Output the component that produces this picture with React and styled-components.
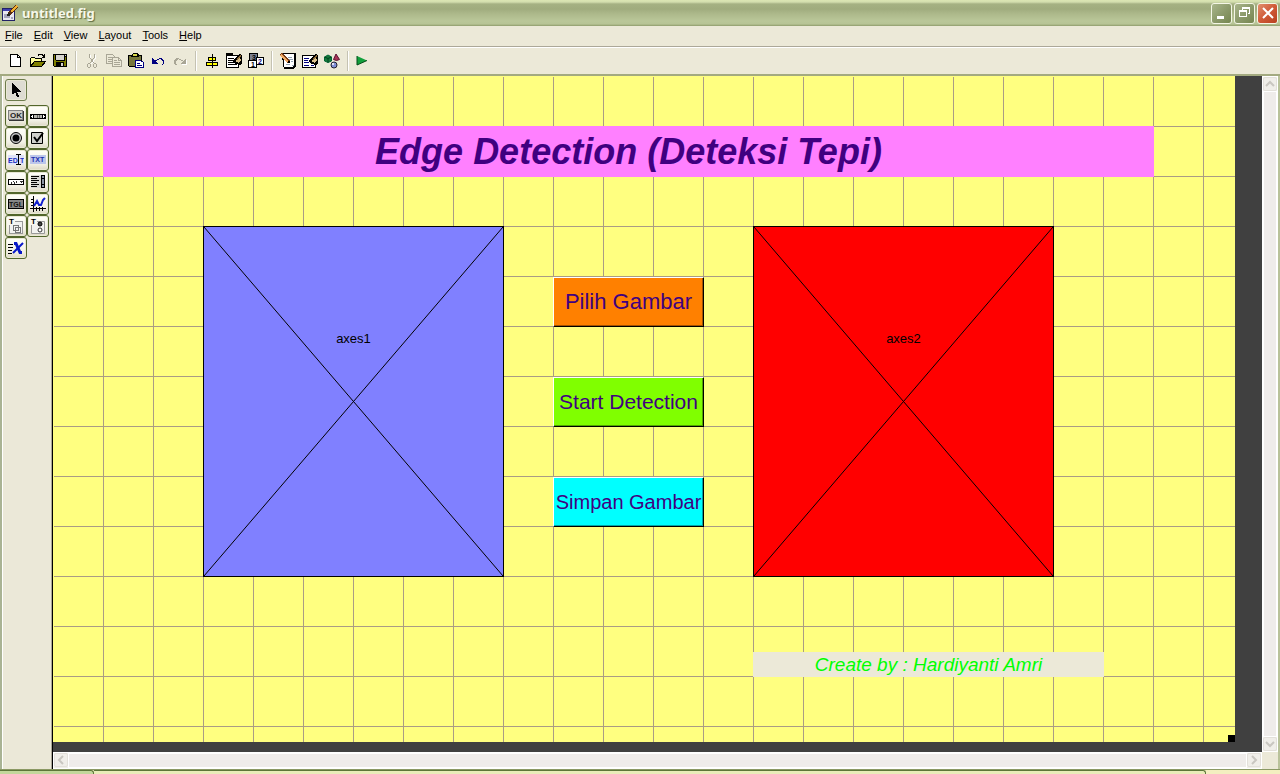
import React from "react";
import styled, { createGlobalStyle, css } from "styled-components";

const GlobalStyle = createGlobalStyle`
  *, *::before, *::after { box-sizing: border-box; }
  body {
    margin: 0;
    overflow: hidden;
    background: #ece9d8;
    font-family: "Liberation Sans", Arial, sans-serif;
    font-size: 11px;
    color: #000;
  }
  button { font: inherit; color: inherit; padding: 0; margin: 0; }
`;

/* ---------- window frame ---------- */

const Window = styled.div`
  display: flex;
  flex-direction: column;
  height: 100vh;
`;

const TitleBar = styled.header`
  display: flex;
  align-items: center;
  flex: none;
  height: 26px;
  padding: 0 2px;
  background: linear-gradient(
    #dce6b4 0px, #d3deae 2px, #a5b183 4px, #a0ac7e 9px,
    #adb98b 14px, #bac799 21px, #b7c495 24px, #8f9c6c 26px
  );
`;

const WindowTitle = styled.h1`
  flex: 1;
  margin: 0 0 0 4px;
  font: bold 13px/18px "Noto Sans", "Open Sans", sans-serif;
  color: #f6f8ea;
  text-shadow: 1px 1px 1px #5f6c43;
`;

const CaptionButtons = styled.div`
  display: flex;
  gap: 2px;
`;

const CaptionButton = styled.button`
  display: grid;
  place-items: center;
  width: 21px;
  height: 21px;
  border: 1px solid #f4f6e6;
  border-radius: 3px;
  background: ${(p) =>
    p.$close
      ? "linear-gradient(135deg, #e0906e, #d05a38 50%, #b8401f)"
      : "linear-gradient(135deg, #a9b58b, #8d9b6c 50%, #76864f)"};
`;

const MenuBar = styled.nav`
  display: flex;
  align-items: flex-start;
  gap: 11px;
  flex: none;
  height: 20px;
  padding-left: 5px;
`;

const MenuItem = styled.button`
  border: 0;
  background: none;
  line-height: 18px;
`;

const Toolbar = styled.div`
  display: flex;
  align-items: center;
  flex: none;
  height: 30px;
  padding-left: 5px;
  border-top: 1px solid #aca899;
  border-bottom: 2px solid #a3aa80;
  box-shadow: inset 0 1px #fff;
`;

const ToolButton = styled.button`
  display: grid;
  place-items: center;
  width: 22px;
  height: 22px;
  border: 0;
  background: none;
`;

const Separator = styled.span`
  width: 2px;
  height: 20px;
  margin: 0 4px;
  border-left: 1px solid #c5c2b2;
  border-right: 1px solid #fff;
`;

const Icon = styled.svg.attrs({ viewBox: "0 0 16 16", "aria-hidden": true })`
  display: block;
  width: 16px;
  height: 16px;
  shape-rendering: ${(p) => (p.$smooth ? "auto" : "crispEdges")};
  text { font-family: "Liberation Sans", Arial, sans-serif; font-weight: bold; }
`;

/* ---------- palette ---------- */

const Body = styled.main`
  display: flex;
  flex: 1;
  min-height: 0;
  border-right: 2px solid #b9c29a;
`;

const Palette = styled.aside`
  flex: none;
  width: 53px;
  padding: 3px 0 0 2px;
  background: #ebe8d8;
  border-left: 2px solid #a9b394;
  border-right: 1px solid #000;
  box-shadow: inset 1px 0 #fff, inset -1px 0 #aca899;
`;

const PaletteGrid = styled.div`
  display: grid;
  grid-template-columns: 22px 22px;
  margin: 4px 0 0 1px;
`;

const PaletteButton = styled.button`
  display: grid;
  place-items: center;
  width: 22px;
  height: 22px;
  border: 1px solid #52662b;
  border-radius: 3px;
  background: linear-gradient(#fffffa, #f3f1e6 70%, #dcd8c4);
  box-shadow: inset 0 0 0 1px #e9e8d4;
  ${(p) =>
    p.$pressed &&
    css`
      margin-left: 1px;
      background: #dedcd2;
      border-color: #6d7c4c;
    `}
`;

/* ---------- work area ---------- */

const WorkArea = styled.section`
  display: grid;
  grid-template: 1fr 17px / 1fr 16px;
  flex: 1;
  min-width: 0;
`;

const Desk = styled.div`
  display: flex;
  padding: 0 27px 10px 0;
  background: #404040;
`;

const Figure = styled.div`
  position: relative;
  flex: 1;
  overflow: hidden;
  background:
    repeating-linear-gradient(90deg, #aa9c84 0 1px, transparent 1px 50px),
    repeating-linear-gradient(#aa9c84 0 1px, transparent 1px 50px),
    #ffff80;
  box-shadow: inset 1px 1px #ffff80;
`;

/* A component placed freely on the figure canvas. */
const placed = css`
  position: absolute;
  left: ${(p) => p.$x}px;
  top: ${(p) => p.$y}px;
  width: ${(p) => p.$w}px;
  height: ${(p) => p.$h}px;
`;

const StaticText = styled.div`
  ${placed}
  display: grid;
  place-items: center;
  white-space: nowrap;
  background: ${(p) => p.$bg};
  color: ${(p) => p.$color};
  font-style: italic;
  font-weight: ${(p) => (p.$bold ? "bold" : "normal")};
  font-size: ${(p) => p.$size}px;
`;

const PushButton = styled.button`
  ${placed}
  display: grid;
  place-content: center;
  border: 1px solid;
  border-color: #fff #000 #000 #fff;
  box-shadow: inset -1px -1px #00000059;
  background: ${(p) => p.$bg};
  color: #400080;
  font-size: ${(p) => p.$size}px;
  white-space: nowrap;
`;

const AxesBox = styled.div`
  ${placed}
  background: ${(p) => p.$bg};
  border: 1px solid #000;
  padding-top: 104px;
  text-align: center;
  font-size: 13px;
  line-height: 16px;
`;

const AxesCross = styled.svg`
  position: absolute;
  inset: 0;
  width: 100%;
  height: 100%;
`;

const ResizeHandle = styled.span`
  position: absolute;
  right: 0;
  bottom: 0;
  width: 7px;
  height: 7px;
  background: #000;
`;

const ScrollBar = styled.div`
  display: flex;
  flex-direction: ${(p) => (p.$vertical ? "column" : "row")};
  background: #f1efea;
  border: 1px solid #fff;
`;

const ScrollTrack = styled.div`
  flex: 1;
  background: #efecea;
  border: 1px solid #fff;
`;

const ScrollButton = styled.button`
  display: grid;
  place-items: center;
  width: 14px;
  height: 14px;
  border: 1px solid #e3e0da;
  border-radius: 2px;
  background: #f0eee9;
`;

const BottomEdge = styled.footer`
  display: flex;
  flex: none;
  height: 5px;
  border-top: 1px solid #8b9964;
  background: #f3eec0;
`;

const TaskEdge = styled.span`
  width: ${(p) => p.$w};
  border-top: 1px solid #5d7639;
  border-right: 1px solid #5d7639;
  border-top-right-radius: 3px;
  background: ${(p) => p.$bg};
`;

/* ---------- icons ---------- */

const FigIcon = () => (
  <Icon>
    <path fill="#222266" d="M0 3h13v13H0z" />
    <path fill="#e8e8f0" d="M1 6h11v9H1z" />
    <path fill="#3f3fae" d="M1 4h11v2H1z" />
    <path fill="#a4a4bc" d="M2 9h6v4H2zM9 12h2v2H9z" />
    <path stroke="#5a2d10" strokeWidth="4" d="M7 9L15 1" />
    <path stroke="#f0b030" strokeWidth="2" d="M9 7L15 1" />
    <path fill="#222" d="M6 8h2v3H5z" />
  </Icon>
);

const NewIcon = () => (
  <Icon>
    <path fill="#fff" stroke="#000" d="M2.500 1.500h7l3 3v9h-10z" />
    <path fill="none" stroke="#000" d="M9.500 1.500v3h3" />
  </Icon>
);

const OpenIcon = () => (
  <Icon>
    <path fill="#ffff9c" stroke="#000" d="M.5 13V5.500l1-1h3l1 1h6v3" />
    <path fill="#808000" stroke="#000" d="M.5 13.500L4.500 8.500H15.500L11.500 13.500z" />
    <path fill="none" stroke="#000" d="M8 2.500l1-1h3l2 2M14.500 1v3h-3" />
  </Icon>
);

const SaveIcon = () => (
  <Icon>
    <path fill="#000" d="M1 1h14v13H2l-1-1z" />
    <path fill="#808000" d="M2 2h1v11H2zM13 4h1v9h-1zM3 8h10v1H3zM3 7h1v6H3zM12 8h1v5h-1z" />
    <path fill="#d6d3ce" d="M4 2h8v5H4zM13 2h1v1h-1zM9 10h2v3H9z" />
  </Icon>
);

const CutIcon = () => (
  <Icon>
    <path fill="none" stroke="#fff" d="M6.500 2v3l4 6M11.500 2v3l-4 6" />
    <path fill="none" stroke="#a9a696" d="M5.500 1v3l4 6M10.500 1v3l-4 6" />
    <path fill="none" stroke="#a9a696" d="M3.500 11.500l1-1h1l1 1v2l-1 1h-1l-1-1zM9.500 11.500l1-1h1l1 1v2l-1 1h-1l-1-1z" />
  </Icon>
);

const CopyIcon = () => (
  <Icon>
    <g fill="#ece9d8" stroke="#a9a696">
      <path d="M.5 1.500h6l2 2v7h-8zM2 4.500h4M2 6.500h4M2 8.500h4" />
      <path d="M6.500 4.500h6l3 3v6h-9zM8 7.500h3M8 9.500h6M8 11.500h6M12.500 4.500v3h3" />
    </g>
  </Icon>
);

const PasteIcon = () => (
  <Icon>
    <path fill="#000" d="M0 2h3l2-2h4l2 2h3v12H1l-1-1z" />
    <path fill="#77773d" d="M1 3h12v10H1z" />
    <path fill="#d8d84a" d="M5 1h4v2H5z" />
    <path fill="#000" d="M3 3h8v1H3z" />
    <path fill="#fff" stroke="#000080" d="M7.500 7.500h5l3 2v5h-8zM9 10.500h3M9 12.500h5" />
  </Icon>
);

const UndoIcon = () => (
  <Icon>
    <path fill="#000080" d="M2 5v6h6zM5 7h2V6h2V5h3v1h1v1h1v4h-1v1h-1v-1h1V8h-1V7h-1V6H9v1H7v1H5z" />
  </Icon>
);

const RedoIcon = () => (
  <Icon>
    <path fill="#fff" d="M15 6v6H9z" />
    <path fill="#a9a696" d="M14 5v6H8zM11 7H9V6H7V5H4v1H3v1H2v4h1v1h2v-1H4V8h1V7h1V6h1v1h2v1h2z" />
  </Icon>
);

const AlignIcon = () => (
  <Icon>
    <path fill="#ffff00" stroke="#000" d="M4.500 4.500h7v3h-7zM2.500 9.500h11v3h-11z" />
    <path fill="#000" d="M8 1h1v14H8z" />
  </Icon>
);

const Hand = () => (
  <>
    <path fill="#000" d="M16 2L13 1 8 6 7 9l2 2 5 1 2-1z" />
    <path fill="#d8c08c" d="M13 5L9 8l4 2 2-3z" />
    <path fill="#8d6a3a" d="M14 2l-4 4 1 1 4-4z" />
  </>
);

const MenuEditIcon = () => (
  <Icon>
    <path fill="#fff" stroke="#000" d="M.5 .5h6v2h6v12h-12z" />
    <path fill="#000" d="M1 1h6v2H1zM2 5h6v1H2zM2 7h5v1H2zM2 9h6v1H2zM2 11h9v1H2z" />
    <Hand />
  </Icon>
);

const TabOrderIcon = () => (
  <Icon>
    <path fill="#7c8090" stroke="#000" d="M1.500 .5h8v8h-8z" />
    <path fill="#fff" stroke="#000" d="M8.500 4.500h7v7h-7zM.5 7.500h8v7h-8z" />
    <text x="4" y="7" fontSize="7">3</text>
    <text x="10" y="11" fontSize="7" fill="#000080">2</text>
    <text x="3" y="14" fontSize="7">1</text>
  </Icon>
);

const MFileIcon = () => (
  <Icon>
    <path fill="#000" d="M2 0h14v13l-3 3H4v-2H3z" />
    <path fill="#fff" d="M2 1h12v11l-2 2H4V4z" />
    <path fill="#90a0b0" d="M8 4h4v1H8zM9 6h4v1H9zM11 8h2v1h-2zM6 11h4v1H6zM12 12h2v1h-2z" />
    <path stroke="#7a3c14" strokeWidth="3" d="M1 1l8 8" />
    <path stroke="#f0a860" strokeWidth="2" d="M1 2l7 7" />
    <path fill="#000" d="M8 8h2v2H8z" />
  </Icon>
);

const PropertyIcon = () => (
  <Icon>
    <path fill="#fff" stroke="#000" d="M.5 2.500h13v12H.5z" />
    <path fill="#000080" d="M2 5h5v1H2zM2 7h4v1H2zM2 9h5v1H2zM2 12h5v1H2zM9 12h3v1H9z" />
    <Hand />
  </Icon>
);

const ObjectsIcon = () => (
  <Icon $smooth>
    <path fill="#167a3c" stroke="#063" d="M.5 4L4 2l3.500 2v4L4 9.500.5 8z" />
    <path fill="none" stroke="#042" d="M.5 4L4 5.500 7.500 4M4 5.500v4" />
    <path fill="#a83256" stroke="#5a1030" d="M12 1L9.500 6.500l3 1 3-1z" />
    <circle cx="10" cy="12" r="3" fill="#8090d8" stroke="#223" />
    <circle cx="9" cy="11" r="1" fill="#fff" />
  </Icon>
);

const RunIcon = () => (
  <Icon $smooth>
    <path fill="#12a03c" d="M1 3L11 7.500 1 12z" />
    <path fill="none" stroke="#044a18" d="M1 12V3M1 12L11 7.500" />
  </Icon>
);

const ArrowIcon = () => (
  <Icon>
    <path fill="#000" d="M4 1v11h1l2-2 2 5h2V14l-2-4h4V9z" />
  </Icon>
);

const OkIcon = () => (
  <Icon>
    <path fill="#d0cfc8" stroke="#808080" d="M.5 2.500h14v9H.5z" />
    <path fill="#333" d="M1 12h15v1H1zM15 3h1v9h-1z" />
    <text x="2" y="10" fontSize="8" fill="#222">OK</text>
  </Icon>
);

const SliderIcon = () => (
  <Icon>
    <path fill="#000" d="M0 6h16v5H0z" />
    <path fill="#b8b8b0" d="M4 7h8v3H4z" />
    <path fill="#fff" d="M1 8h1v1H1zM2 7h1v3H2zM14 8h1v1h-1zM13 7h1v3h-1z" />
    <path fill="#666" d="M7 7h1v3H7zM9 7h1v3H9z" />
  </Icon>
);

const RadioIcon = () => (
  <Icon $smooth>
    <circle cx="8" cy="8" r="5.500" fill="#c8c8c8" stroke="#000" />
    <circle cx="8" cy="8" r="3.500" fill="#000" />
  </Icon>
);

const CheckIcon = () => (
  <Icon $smooth>
    <path fill="#d0d0cc" stroke="#000" d="M1.500 2.500h11v11h-11z" />
    <path fill="none" stroke="#000" strokeWidth="2" d="M4 7l3 4 6-8" />
  </Icon>
);

const EditIcon = () => (
  <Icon>
    <path fill="#dfe3f8" d="M0 3h16v10H0z" />
    <text x="0" y="11" fontSize="7" fill="#2030c0">ED</text>
    <text x="12" y="11" fontSize="7" fill="#2030c0">T</text>
    <path fill="none" stroke="#000" d="M8 2.500h2.500v10H8M13 2.500h-2M13 12.500h-2" />
  </Icon>
);

const TxtIcon = () => (
  <Icon>
    <path fill="#bcc6ea" d="M0 3h16v9H0z" />
    <text x="1" y="10" fontSize="7" fill="#2030b0">TXT</text>
  </Icon>
);

const PopupIcon = () => (
  <Icon>
    <path fill="#fff" stroke="#000" d="M.5 5.500h15v5H.5z" />
    <path fill="#333" d="M3 8h1v2H3zM5 7h1v1H5zM6 8h1v2H6zM8 7h1v2H8zM12 7h3v1h-1v1h-1V8h-1z" />
  </Icon>
);

const ListIcon = () => (
  <Icon>
    <path fill="#d8d8d4" d="M1 1h10v13H1z" />
    <path fill="#000" d="M1 2h8v1H1zM1 4h6v1H1zM1 6h8v1H1zM1 8h6v1H1zM1 10h8v1H1zM1 12h6v1H1z" />
    <path fill="#8a94a4" stroke="#000" d="M11.500 1.500h3v12h-3z" />
    <path fill="#000" d="M12 4h2v1h-2zM12 10h2v1h-2z" />
  </Icon>
);

const ToggleIcon = () => (
  <Icon>
    <path fill="#858585" stroke="#000" d="M.5 3.500h15v9H.5z" />
    <text x="1" y="11" fontSize="7" fill="#111">TGL</text>
  </Icon>
);

const AxesIcon = () => (
  <Icon>
    <path fill="none" stroke="#000" d="M3.500 0v16M0 12.500h16M1 9.500h2M1 6.500h2M1 3.500h2M6.500 11v4M9.500 11v4M12.500 11v4" />
    <path fill="none" stroke="#1020d0" strokeWidth="2" shapeRendering="auto" d="M4 10l3-5 2 4h2l2-5 2-2" />
  </Icon>
);

const PanelIcon = () => (
  <Icon>
    <path fill="#f2f2f0" stroke="#999" d="M1.500 3.500h13v12h-13z" />
    <path fill="#f8f7f0" d="M0 0h7v7H0z" />
    <text x="1" y="6" fontSize="8">T</text>
    <path fill="none" stroke="#777" d="M5.500 7.500h5v5h-5zM7.500 9.500h5v5h-5z" />
  </Icon>
);

const GroupIcon = () => (
  <Icon $smooth>
    <path fill="#f2f2f0" stroke="#999" d="M1.500 3.500h13v12h-13z" />
    <path fill="#f8f7f0" d="M0 0h7v7H0z" />
    <text x="1" y="6" fontSize="8">T</text>
    <circle cx="10" cy="6" r="2" fill="#444" stroke="#000" />
    <circle cx="10" cy="12" r="2" fill="#fff" stroke="#333" />
  </Icon>
);

const ActiveXIcon = () => (
  <Icon $smooth>
    <path fill="#000" d="M0 4h5v1H0zM0 7h5v1H0zM0 10h4v1H0zM0 13h4v1H0z" />
    <path fill="none" stroke="#0818c8" strokeWidth="3" d="M6 3.500h2l4 9h2" />
    <path fill="none" stroke="#0818c8" strokeWidth="2" d="M15 3L5 13" />
  </Icon>
);

const MinimizeIcon = () => (
  <Icon><path fill="#fff" d="M3 11h7v3H3z" /></Icon>
);
const RestoreIcon = () => (
  <Icon>
    <path fill="none" stroke="#fff" d="M5.500 5V2.500h7v6H11M5 3.500h8M2.500 5.500h7v6h-7zM2 6.500h8" />
  </Icon>
);
const CloseIcon = () => (
  <Icon $smooth><path stroke="#fff" strokeWidth="2" d="M3 3l10 10M13 3L3 13" /></Icon>
);

const chevrons = {
  left: "M7 1L3 5l4 4",
  right: "M3 1l4 4-4 4",
  up: "M1 7l4-4 4 4",
  down: "M1 3l4 4 4-4",
};

const Chevron = ({ dir }) => (
  <svg width="10" height="10" viewBox="0 0 10 10" aria-hidden="true">
    <path d={chevrons[dir]} fill="none" stroke="#c9c6c0" strokeWidth="2" />
  </svg>
);

/* ---------- data ---------- */

const menus = ["File", "Edit", "View", "Layout", "Tools", "Help"];

const toolGroups = [
  [["New", NewIcon], ["Open", OpenIcon], ["Save", SaveIcon]],
  [["Cut", CutIcon], ["Copy", CopyIcon], ["Paste", PasteIcon], ["Undo", UndoIcon], ["Redo", RedoIcon]],
  [["Align Objects", AlignIcon], ["Menu Editor", MenuEditIcon], ["Tab Order Editor", TabOrderIcon]],
  [["M-file Editor", MFileIcon], ["Property Inspector", PropertyIcon], ["Object Browser", ObjectsIcon]],
  [["Run", RunIcon]],
];

const paletteItems = [
  ["Push Button", OkIcon], ["Slider", SliderIcon],
  ["Radio Button", RadioIcon], ["Check Box", CheckIcon],
  ["Edit Text", EditIcon], ["Static Text", TxtIcon],
  ["Pop-up Menu", PopupIcon], ["Listbox", ListIcon],
  ["Toggle Button", ToggleIcon], ["Axes", AxesIcon],
  ["Panel", PanelIcon], ["Button Group", GroupIcon],
  ["ActiveX Control", ActiveXIcon],
];

const pushButtons = [
  { label: "Pilih Gambar", y: 201, bg: "#ff8000", size: 22 },
  { label: "Start Detection", y: 301, bg: "#80ff00", size: 21 },
  { label: "Simpan Gambar", y: 401, bg: "#00ffff", size: 20 },
];

function Axes({ name, ...place }) {
  return (
    <AxesBox {...place}>
      <AxesCross viewBox="0 0 100 100" preserveAspectRatio="none" aria-hidden="true">
        <path d="M0 0L100 100M100 0L0 100" stroke="#000" vectorEffect="non-scaling-stroke" shapeRendering="crispEdges" />
      </AxesCross>
      {name}
    </AxesBox>
  );
}

export default function App() {
  return (
    <Window>
      <GlobalStyle />
      <TitleBar>
        <FigIcon />
        <WindowTitle>untitled.fig</WindowTitle>
        <CaptionButtons>
          <CaptionButton aria-label="Minimize"><MinimizeIcon /></CaptionButton>
          <CaptionButton aria-label="Restore"><RestoreIcon /></CaptionButton>
          <CaptionButton $close aria-label="Close"><CloseIcon /></CaptionButton>
        </CaptionButtons>
      </TitleBar>

      <MenuBar>
        {menus.map((m) => (
          <MenuItem key={m}><u>{m[0]}</u>{m.slice(1)}</MenuItem>
        ))}
      </MenuBar>

      <Toolbar role="toolbar">
        {toolGroups.map((group, i) => (
          <React.Fragment key={i}>
            {i > 0 && <Separator />}
            {group.map(([label, Glyph]) => (
              <ToolButton key={label} aria-label={label}><Glyph /></ToolButton>
            ))}
          </React.Fragment>
        ))}
      </Toolbar>

      <Body>
        <Palette>
          <PaletteButton $pressed aria-label="Select"><ArrowIcon /></PaletteButton>
          <PaletteGrid>
            {paletteItems.map(([label, Glyph]) => (
              <PaletteButton key={label} aria-label={label}><Glyph /></PaletteButton>
            ))}
          </PaletteGrid>
        </Palette>

        <WorkArea>
          <Desk>
            <Figure>
              <StaticText $x={50} $y={50} $w={1051} $h={51} $bg="#ff80ff" $color="#400080" $size={36} $bold>
                Edge Detection (Deteksi Tepi)
              </StaticText>
              <Axes name="axes1" $x={150} $y={150} $w={301} $h={351} $bg="#8080ff" />
              <Axes name="axes2" $x={700} $y={150} $w={301} $h={351} $bg="#ff0000" />
              {pushButtons.map((b) => (
                <PushButton key={b.label} $x={500} $y={b.y} $w={151} $h={50} $bg={b.bg} $size={b.size}>
                  {b.label}
                </PushButton>
              ))}
              <StaticText $x={700} $y={576} $w={351} $h={25} $bg="#ece9d8" $color="#00ff00" $size={19}>
                Create by : Hardiyanti Amri
              </StaticText>
              <ResizeHandle />
            </Figure>
          </Desk>
          <ScrollBar $vertical>
            <ScrollButton aria-label="Scroll up"><Chevron dir="up" /></ScrollButton>
            <ScrollTrack />
            <ScrollButton aria-label="Scroll down"><Chevron dir="down" /></ScrollButton>
          </ScrollBar>
          <ScrollBar>
            <ScrollButton aria-label="Scroll left"><Chevron dir="left" /></ScrollButton>
            <ScrollTrack />
            <ScrollButton aria-label="Scroll right"><Chevron dir="right" /></ScrollButton>
          </ScrollBar>
        </WorkArea>
      </Body>

      <BottomEdge>
        <TaskEdge $w="94px" $bg="#c3d79b" />
        <TaskEdge $w="calc(100% - 168px)" $bg="#e9edb9" />
      </BottomEdge>
    </Window>
  );
}
